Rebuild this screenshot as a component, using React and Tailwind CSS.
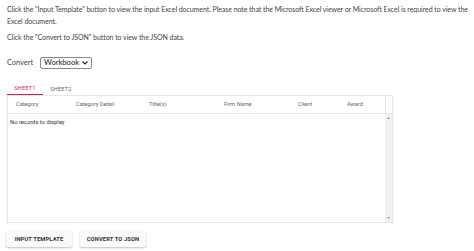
import React from "react";

const columns = [
  { name: "Category", w: "w-[60px]" },
  { name: "Category Detail", w: "w-[73px]" },
  { name: "Title(s)", w: "w-[75px]" },
  { name: "Firm Name", w: "w-[74px]" },
  { name: "Client", w: "w-[49px]" },
  { name: "Award", w: "flex-1" },
];

const App = () => {
  return (
    <div className="w-[474px] h-[251px] bg-white text-[#333] font-['Lato',sans-serif] overflow-hidden">
      <div className="pl-[7px] pr-0 pt-[3px] text-[7px] tracking-[-0.06px] leading-[12px] text-[#444]">
        <p>
          Click the "Input Template" button to view the input Excel document. Please note that the Microsoft Excel viewer or Microsoft Excel is required to view the Excel document.
        </p>
        <p className="mt-[4px]">Click the "Convert to JSON" button to view the JSON data.</p>
      </div>

      <div className="flex items-center px-[7px] mt-[14px]">
        <span className="text-[7.4px] text-[#444] w-[33px]">Convert</span>
        <div className="flex items-center justify-between w-[52px] h-[12px] border border-[#888] rounded-[2px] px-[3px] text-[7.6px] text-[#222]">
          <span>Workbook</span>
          <svg width="6" height="4" viewBox="0 0 6 4">
            <path d="M0.5 0.5 L3 3 L5.5 0.5" stroke="#222" strokeWidth="1.2" fill="none" />
          </svg>
        </div>
      </div>

      <div className="flex px-[7px] mt-[14px] text-[5.6px] tracking-[0.2px] font-['Roboto',sans-serif]">
        <div className="w-[36px] h-[12px] flex items-center justify-center text-[#e3165b] border-b-[1.5px] border-[#e3165b]">
          SHEET1
        </div>
        <div className="w-[36px] h-[12px] flex items-center justify-center text-[#666]">SHEET2</div>
      </div>

      <div className="mx-[7px] w-[386px] h-[128px] border border-[#e6e6e6] flex flex-col font-['Roboto',sans-serif]">
        <div className="flex h-[18px] border-b border-[#e6e6e6] text-[5.6px] text-[#666]">
          <div className="flex flex-1 items-center pl-[8px]">
            {columns.map((c) => (
              <div key={c.name} className={c.w}>
                {c.name}
              </div>
            ))}
          </div>
          <div className="w-[7px] border-l border-[#e6e6e6]"></div>
        </div>
        <div className="flex flex-1">
          <div className="flex-1 pl-[2px] pt-[4px] text-[5.8px] text-[#333]">No records to display</div>
          <div className="w-[7px] bg-[#f0f0f0] flex flex-col items-center justify-between py-[3px]">
            <svg width="3" height="2" viewBox="0 0 3 2">
              <path d="M0 2 L1.5 0 L3 2 Z" fill="#999" />
            </svg>
            <svg width="3" height="2" viewBox="0 0 3 2">
              <path d="M0 0 L1.5 2 L3 0 Z" fill="#999" />
            </svg>
          </div>
        </div>
      </div>

      <div className="flex gap-[8px] px-[6px] mt-[8px] font-['Roboto',sans-serif]">
        <button className="h-[16px] w-[66px] bg-[#fafafa] rounded-[2px] shadow-[0_1px_2px_rgba(0,0,0,0.25)] text-[5.8px] font-bold text-[#333] tracking-[0.1px]">
          INPUT TEMPLATE
        </button>
        <button className="h-[16px] w-[66px] bg-[#fafafa] rounded-[2px] shadow-[0_1px_2px_rgba(0,0,0,0.25)] text-[5.8px] font-bold text-[#333] tracking-[0.1px]">
          CONVERT TO JSON
        </button>
      </div>
    </div>
  );
};

export default App;
